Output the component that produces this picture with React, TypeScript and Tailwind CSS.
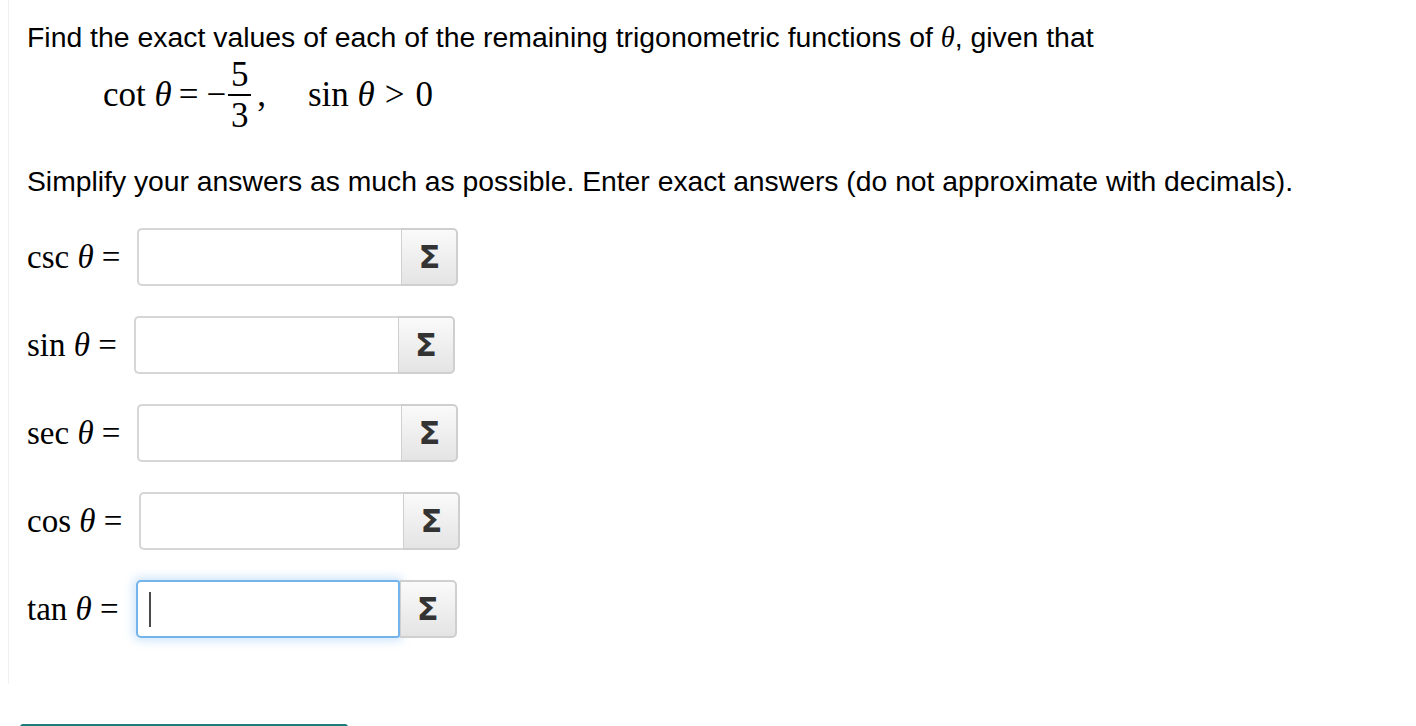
import React from 'react';

// Campos que el alumno tiene que completar
const fields = [
  { fn: 'csc' },
  { fn: 'sin' },
  { fn: 'sec' },
  { fn: 'cos' },
  { fn: 'tan', focused: true },
];

const serif = "font-['Liberation_Serif','Times_New_Roman',serif]";

const Theta = () => <span className="italic">θ</span>;

const AnswerRow: React.FC<{ fn: string; focused?: boolean }> = ({ fn, focused }) => (
  <div className="flex items-center h-[58px]">
    <span className={`${serif} text-[33px] leading-none text-black whitespace-pre`}>
      {fn} <Theta /> =
    </span>
    <div className="flex ml-[17px] h-[58px]">
      <div
        className={`w-[264px] h-full rounded-l-[5px] bg-white flex items-center pl-[11px] ${
          focused
            ? 'border-2 border-[#74b4ea] shadow-[0_0_10px_3px_rgba(120,180,240,0.35)] rounded-r-[3px]'
            : 'border-2 border-r-0 border-[#d6d6d6]'
        }`}
      >
        {focused && <div className="w-[2px] h-[35px] bg-[#4a4a4a]" />}
      </div>
      <button className="w-[57px] h-full rounded-r-[5px] border-2 border-l border-[#cfcfcf] bg-gradient-to-b from-[#fafafa] to-[#e4e4e4] flex items-center justify-center">
        <span className="font-['DejaVu_Sans',sans-serif] font-bold text-[32px] text-[#333] leading-none">Σ</span>
      </button>
    </div>
  </div>
);

const App: React.FC = () => {
  return (
    <div className="w-[1416px] h-[726px] overflow-hidden bg-white text-black font-['Liberation_Sans',Arial,sans-serif]">
      <div className="ml-[8px] h-[684px] border-l border-[#f1f1f1] pl-[18px] pt-[21px]">
        {/* Enunciado */}
        <p className="text-[28.4px] leading-[32px]">
          Find the exact values of each of the remaining trigonometric functions of{' '}
          <span className={`${serif} italic`}>θ</span>, given that
        </p>

        <div className={`${serif} text-[35px] flex items-center ml-[76px] mt-[7px] h-[68px]`}>
          <span className="whitespace-pre leading-[40px]">cot <Theta /></span>
          <span className="leading-[40px] ml-[7px]">=</span>
          <span className="leading-[40px] ml-[8px]">−</span>
          <span className="inline-flex flex-col items-center leading-none ml-[2px]">
            <span className="leading-[33px] px-[2px] pb-[3px]">5</span>
            <span className="w-[23px] h-[2px] bg-black" />
            <span className="leading-[33px] px-[2px] pt-[3px]">3</span>
          </span>
          <span className="leading-[40px] ml-[6px]">,</span>
          <span className="ml-[42px] whitespace-pre leading-[40px]">sin <Theta /></span>
          <span className="leading-[40px] ml-[10px]">&gt;</span>
          <span className="leading-[40px] ml-[11px]">0</span>
        </div>

        <p className="text-[28.3px] leading-[32px] mt-[36px]">
          Simplify your answers as much as possible. Enter exact answers (do not approximate with decimals).
        </p>

        <div className="mt-[31px] flex flex-col gap-[30px]">
          {fields.map((f) => (
            <AnswerRow key={f.fn} fn={f.fn} focused={f.focused} />
          ))}
        </div>
      </div>

      {/* Botón inferior, solo asoma el borde */}
      <div className="ml-[20px] mt-[40px] w-[328px] h-[40px] bg-[#1a7d77] rounded-t-[3px]" />
    </div>
  );
};

export default App;
